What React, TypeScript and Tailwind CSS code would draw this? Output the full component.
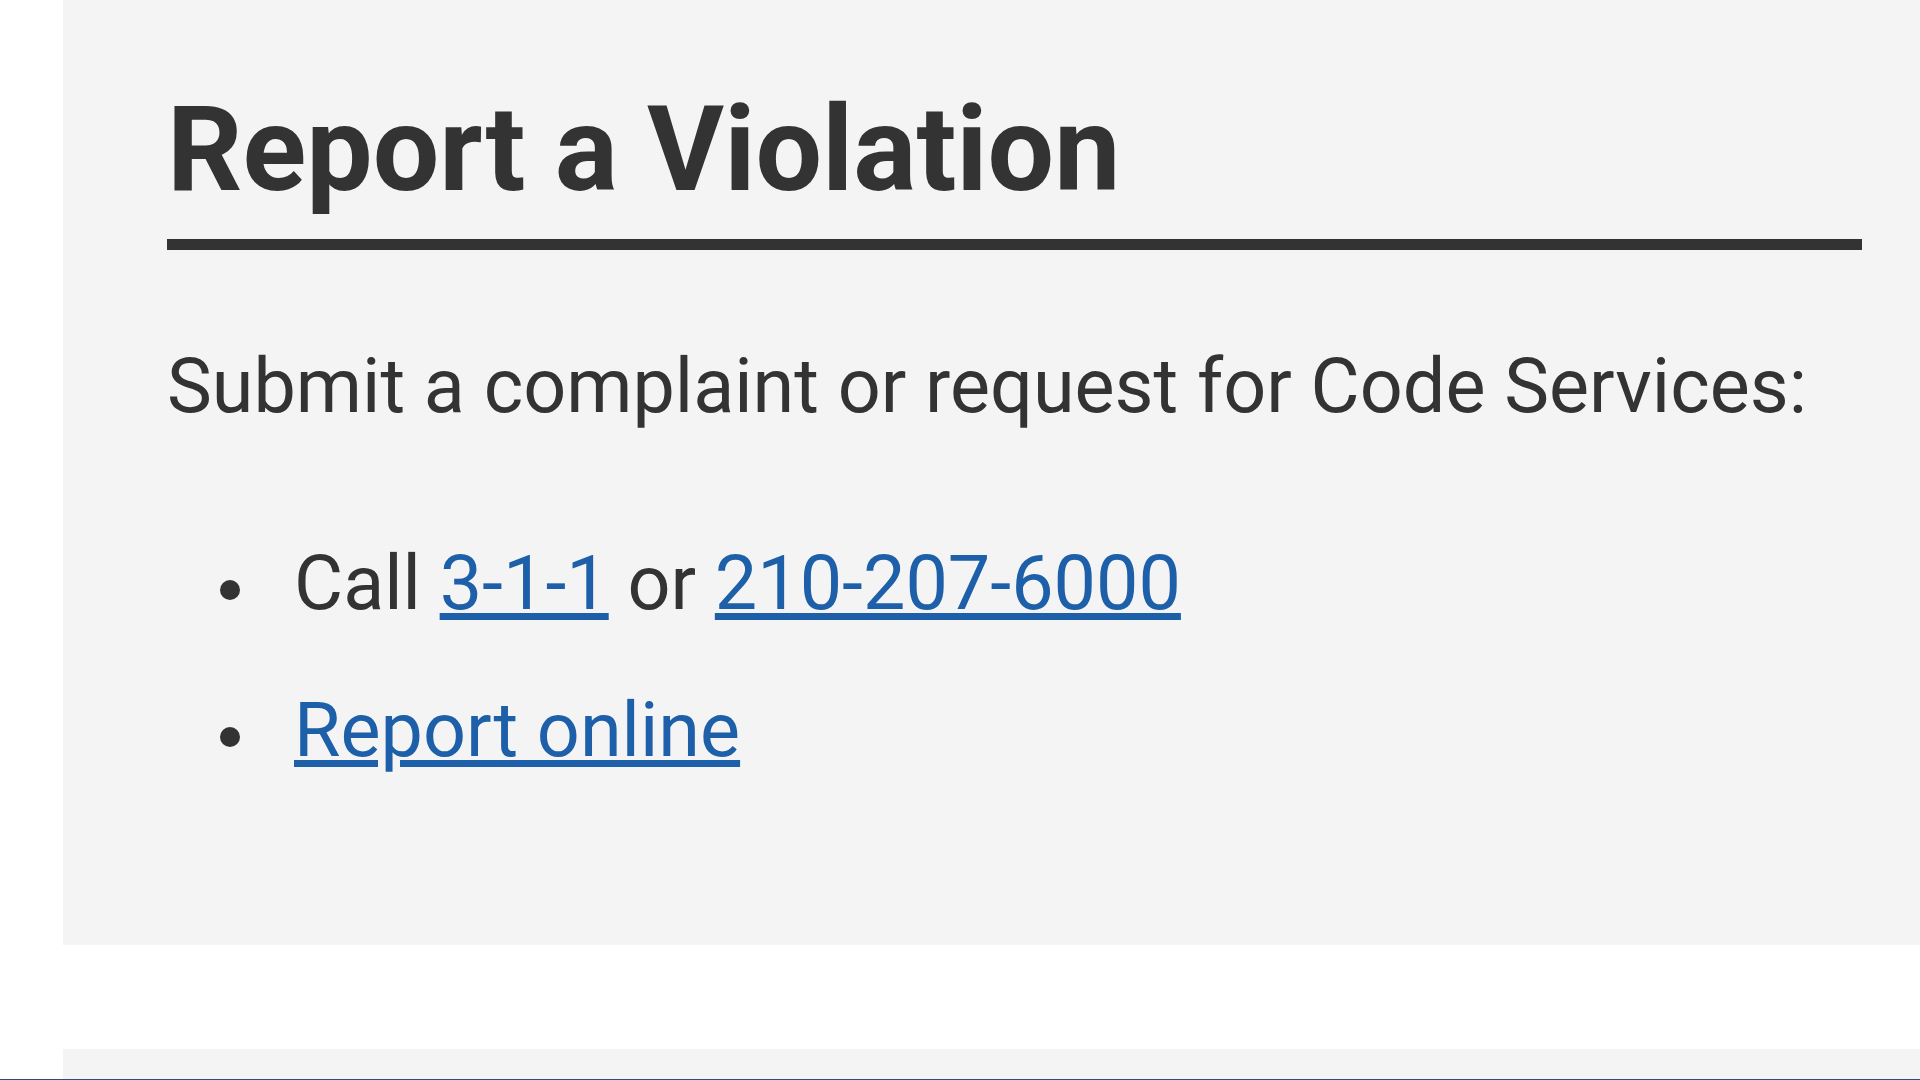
export default function App() {
  return (
    <div className="min-h-screen bg-white font-['Roboto',sans-serif] text-[#333]">
      {/* Violation panel */}
      <section className="ml-[63px] bg-[#f4f4f4] pt-[80px] pb-[78px] pl-[104px] pr-[58px]">
        <h2 className="text-[118px] font-bold leading-[1.2] pb-[17px] border-b-[11px] border-[#333]">
          Report a Violation
        </h2>
        <p className="mt-[78px] text-[75.5px] leading-[117px]">
          Submit a complaint or request for Code Services:
        </p>
        <ul className="mt-[80px] mb-[78px] text-[75.5px] leading-[117px]">
          <li className="mb-[30px] flex">
            <span className="ml-[53px] mt-[55px] h-[20px] w-[20px] shrink-0 rounded-full bg-[#333]" />
            <span className="ml-[54px]">
              Call{" "}
              <a href="#" className="text-[#1d5fa8] underline">
                3-1-1
              </a>{" "}
              or{" "}
              <a href="#" className="text-[#1d5fa8] underline">
                210-207-6000
              </a>
            </span>
          </li>
          <li className="flex">
            <span className="ml-[53px] mt-[55px] h-[20px] w-[20px] shrink-0 rounded-full bg-[#333]" />
            <span className="ml-[54px]">
              <a href="#" className="text-[#1d5fa8] underline">
                Report online
              </a>
            </span>
          </li>
        </ul>
      </section>

      <div className="h-[104px]" />

      {/* Next panel, cut off by the window */}
      <section className="ml-[63px] h-[30px] bg-[#f4f4f4]" />
      <div className="h-[40px] border-t border-[#2d4f73] bg-white" />
    </div>
  );
}
